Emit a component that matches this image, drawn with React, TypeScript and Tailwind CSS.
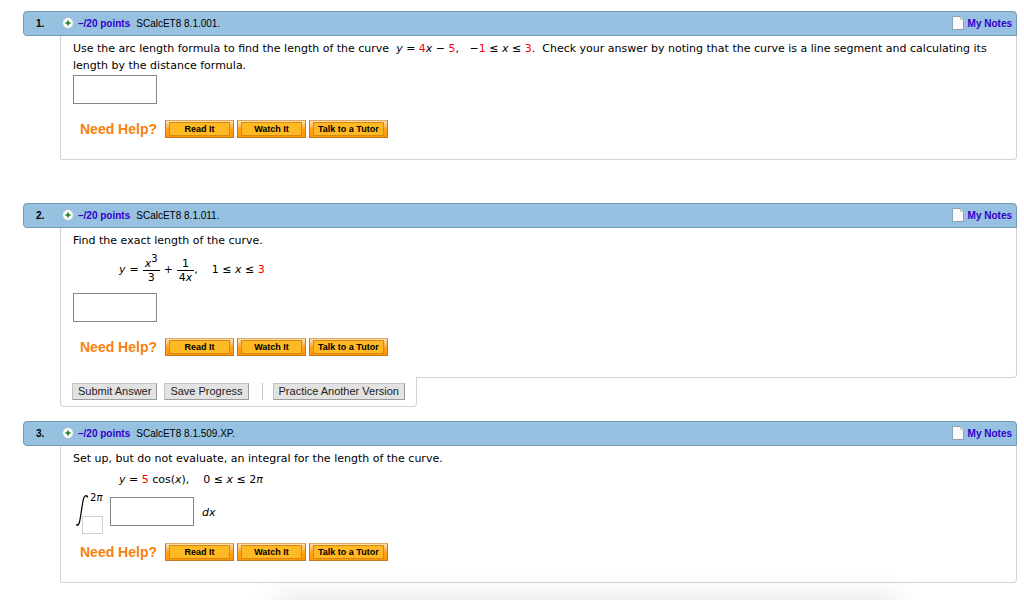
import type { ReactNode } from "react";

const PlusIcon = () => (
  <svg viewBox="0 0 12 12" className="w-3 h-3" aria-hidden="true">
    <circle cx="6" cy="6" r="5.4" fill="#fff" stroke="#a9bccb" strokeWidth="0.9" />
    <path d="M6 3.4v5.2M3.4 6h5.2" stroke="#12891b" strokeWidth="1.7" />
  </svg>
);

const NoteIcon = () => (
  <svg viewBox="0 0 12 14" className="w-3 h-3.5" aria-hidden="true">
    <path d="M.5.5h8l3 3v10H.5z" fill="#fbfbfb" stroke="#84a4ba" />
    <path d="M8.5.5v3h3" fill="#e6e6e6" stroke="#a9b8c2" strokeWidth="0.7" />
  </svg>
);

const IntegralSign = () => (
  <svg viewBox="0 0 16 34" className="mt-0.5 h-[34px] w-4 shrink-0" aria-hidden="true">
    <path
      d="M14.500 2.400C12.800.9 11.300 1.900 10.500 4.800C9 10.500 8 21.500 6.600 27.500C5.900 30.500 4.900 31.900 3.700 30.900"
      fill="none"
      stroke="#000"
      strokeWidth="1.2"
    />
    <circle cx="14.300" cy="2.600" r="0.900" />
    <circle cx="4" cy="30.800" r="0.900" />
  </svg>
);

const Red = ({ children }: { children: ReactNode }) => (
  <span className="text-[#ff0000]">{children}</span>
);

const Fraction = ({ top, bottom }: { top: ReactNode; bottom: ReactNode }) => (
  <span className="inline-flex flex-col text-center leading-[13px]">
    <span className="border-b border-black px-0.5">{top}</span>
    <span className="px-0.5">{bottom}</span>
  </span>
);

const AnswerBox = ({ label }: { label: string }) => (
  <input
    type="text"
    aria-label={label}
    className="block w-[84px] h-[29px] border border-[#858585] bg-white px-1"
  />
);

const HelpButton = ({ children }: { children: ReactNode }) => (
  <button
    type="button"
    className="h-[18px] min-w-[69px] border border-[#c87820] border-t-[#dba866] bg-linear-to-b from-[#ffe0b0] via-[#ffa31a] to-[#ff9500] px-[3px] py-px text-[9px] leading-[12px] font-bold text-black"
  >
    <span className="block border border-[#d58a14] bg-[#ffb922] px-1">{children}</span>
  </button>
);

const NeedHelp = () => (
  <div className="flex items-center pl-[7px]">
    <span className="mr-2 w-[77px] whitespace-nowrap text-[14px] leading-[18px] font-bold text-[#f7820b]">
      Need Help?
    </span>
    <div className="flex gap-[3px]">
      <HelpButton>Read It</HelpButton>
      <HelpButton>Watch It</HelpButton>
      <HelpButton>Talk to a Tutor</HelpButton>
    </div>
  </div>
);

const ActionButton = ({ children }: { children: ReactNode }) => (
  <button
    type="button"
    className="h-[17px] border border-[#c4c4c4] border-r-[#9c9c9c] border-b-[#9c9c9c] bg-[#e2e2e2] px-[5px] text-[11px] leading-[15px] text-[#222]"
  >
    {children}
  </button>
);

type QuestionProps = {
  number: number;
  source: string;
  children: ReactNode;
  footer?: ReactNode;
};

const Question = ({ number, source, children, footer }: QuestionProps) => (
  <section>
    <header className="flex h-[25px] items-center rounded-[4px] rounded-br-none border border-[#7599b3] bg-[#96c1e1] pr-1 pb-px text-[10px]">
      <h2 className="w-[38px] pl-3 font-bold">{number}.</h2>
      <button type="button" aria-label="Show points" className="mr-1">
        <PlusIcon />
      </button>
      <a href="#points" className="mr-1.5 font-bold text-[#3300cc]">
        –/20 points
      </a>
      <span>{source}</span>
      <a href="#notes" className="ml-auto flex items-center gap-1 font-bold text-[#3300cc]">
        <NoteIcon />
        My Notes
      </a>
    </header>
    <div
      className={`ml-[37px] border border-t-0 border-[#d3d3d3] px-3 pt-1 pb-[21px] rounded-br-[4px] ${
        footer ? "" : "rounded-bl-[2px]"
      }`}
    >
      {children}
    </div>
    {footer}
  </section>
);

const mathText = "font-['DejaVu_Sans',Verdana,sans-serif] text-[11px] leading-[17px]";

export default function App() {
  return (
    <main className="bg-white pt-[11px] pr-[7px] pl-[23px] font-['Liberation_Sans',Arial,sans-serif] text-black">
      <Question number={1} source="SCalcET8 8.1.001.">
        <p className={mathText}>
          Use the arc length formula to find the length of the curve&nbsp; <i>y</i> = <Red>4</Red>
          <i>x</i> − <Red>5</Red>, &nbsp; −<Red>1</Red> ≤ <i>x</i> ≤ <Red>3</Red>.&nbsp; Check your
          answer by noting that the curve is a line segment and calculating its length by the
          distance formula.
        </p>
        <div className="mt-px mb-4">
          <AnswerBox label="Arc length" />
        </div>
        <NeedHelp />
      </Question>

      <div className="mt-[43px]">
        <Question
          number={2}
          source="SCalcET8 8.1.011."
          footer={
            <div className="relative -mt-px ml-[37px] flex h-[30px] w-fit items-start rounded-b-[4px] border border-t-0 border-[#d3d3d3] bg-white px-[11px] pt-1.5">
              <ActionButton>Submit Answer</ActionButton>
              <span className="w-[7px]" />
              <ActionButton>Save Progress</ActionButton>
              <span className="mr-2.5 ml-[13px] h-[17px] w-px bg-[#c8c8c8]" />
              <ActionButton>Practice Another Version</ActionButton>
            </div>
          }
        >
          <p className={mathText}>Find the exact length of the curve.</p>
          <div className="mb-0.5 flex h-[42px] items-center pl-[46px] font-['DejaVu_Sans',Verdana,sans-serif] text-[11px]">
            <i>y</i>
            <span className="mx-1">=</span>
            <Fraction
              top={
                <>
                  <i>x</i>
                  <sup className="text-[10px] leading-none">3</sup>
                </>
              }
              bottom="3"
            />
            <span className="mx-1">+</span>
            <Fraction
              top="1"
              bottom={
                <>
                  4<i>x</i>
                </>
              }
            />
            <span>,</span>
            <span className="ml-3.5">
              1 ≤ <i>x</i> ≤ <Red>3</Red>
            </span>
          </div>
          <div className="mb-4">
            <AnswerBox label="Exact length" />
          </div>
          <NeedHelp />
        </Question>
      </div>

      <div className="mt-[14px]">
        <Question number={3} source="SCalcET8 8.1.509.XP.">
          <p className={mathText}>Set up, but do not evaluate, an integral for the length of the curve.</p>
          <p className={`${mathText} mt-1 pl-[46px]`}>
            <i>y</i> = <Red>5</Red> cos(<i>x</i>), &nbsp;&nbsp; 0 ≤ <i>x</i> ≤ 2<i>π</i>
          </p>
          <div className="mt-1 mb-[9px] flex h-[42px] font-['DejaVu_Sans',Verdana,sans-serif] text-[11px]">
            <IntegralSign />
            <div className="-ml-[7px] flex w-7 flex-col justify-between">
              <span className="pl-2 text-[10px] leading-3">
                2<i>π</i>
              </span>
              <input
                type="text"
                aria-label="Lower limit"
                className="h-[18px] w-[21px] border border-[#cfcfcf] bg-white"
              />
            </div>
            <div className="mt-[5px] flex h-[29px] items-center gap-2">
              <AnswerBox label="Integrand" />
              <i className="pt-1">dx</i>
            </div>
          </div>
          <NeedHelp />
        </Question>
      </div>

      {/* soft shadow rising from the bottom edge of the window */}
      <div className="pointer-events-none fixed right-[130px] -bottom-9 left-[280px] h-8 shadow-[0_0_30px_6px_rgba(0,0,0,0.11)]" />
    </main>
  );
}
